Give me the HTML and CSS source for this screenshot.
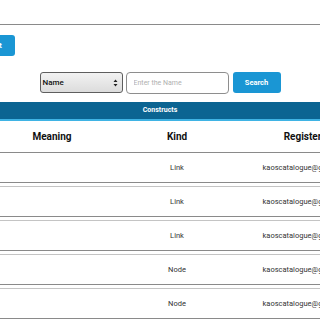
FILE: index.html
```html
<!DOCTYPE html>
<html lang="en">
<head>
  <meta charset="UTF-8">
  <title>Constructs</title>
  <link rel="stylesheet" href="styles.css">
</head>
<body>
  <div class="page">
    <div class="topbar"></div>

    <div class="actions">
      <button class="btn">Insert</button>
    </div>

    <div class="search">
      <div class="select">
        <span>Name</span>
        <svg width="5" height="8" viewBox="0 0 5 8">
          <path d="M0.5 3 L2.5 0.5 L4.5 3 Z M0.5 5 L2.5 7.5 L4.5 5 Z" fill="#222"></path>
        </svg>
      </div>
      <input type="text" class="field" placeholder="Enter the Name">
      <button class="btn search-btn">Search</button>
    </div>

    <div class="table">
      <div class="caption">Constructs</div>
      <div class="row head">
        <div>Name</div>
        <div>Meaning</div>
        <div>Kind</div>
        <div>Registered</div>
        <div>Actions</div>
      </div>
      <div class="row">
        <div>isA</div>
        <div></div>
        <div>Link</div>
        <div>kaoscatalogue@gmail.com</div>
        <div></div>
      </div>
      <div class="row">
        <div>partOf</div>
        <div></div>
        <div>Link</div>
        <div>kaoscatalogue@gmail.com</div>
        <div></div>
      </div>
      <div class="row">
        <div>refines</div>
        <div></div>
        <div>Link</div>
        <div>kaoscatalogue@gmail.com</div>
        <div></div>
      </div>
      <div class="row">
        <div>Goal</div>
        <div></div>
        <div>Node</div>
        <div>kaoscatalogue@gmail.com</div>
        <div></div>
      </div>
      <div class="row">
        <div>Agent</div>
        <div></div>
        <div>Node</div>
        <div>kaoscatalogue@gmail.com</div>
        <div></div>
      </div>
    </div>
  </div>
</body>
</html>
```

FILE: styles.css
```css
:root {
  --blue: #1a96d4;
  --dark-blue: #0b6492;
  --light-blue: #3fb3e4;
  --line: #8a8a8a;
  --line-light: #c4c4c4;
  --text: #333;
}

* {
  margin: 0;
  padding: 0;
  box-sizing: border-box;
}

html, body {
  overflow: hidden;
}

body {
  font-family: Roboto, "Liberation Sans", sans-serif;
  background: white;
  color: var(--text);
}

.page {
  width: 520px;
  margin-left: -100px;
}

.topbar {
  height: 25px;
  border-bottom: 1px solid var(--line);
}

.actions {
  padding: 8px 0 0 69px;
}

.btn {
  background: var(--blue);
  color: white;
  border: none;
  border-radius: 3px;
  font-family: inherit;
  font-weight: 700;
  font-size: 7.5px;
  height: 21px;
  padding: 0 13px;
}

.search {
  display: flex;
  justify-content: center;
  gap: 3px;
  margin-top: 16px;
}

.select {
  width: 83px;
  height: 21px;
  border: 1px solid #5e5e5e;
  border-radius: 3px;
  background: linear-gradient(#f2f2f2, #dcdcdc);
  display: flex;
  align-items: center;
  justify-content: space-between;
  padding: 0 4px 0 2px;
  font-size: 8px;
  font-weight: 500;
  color: #111;
}

.field {
  width: 103px;
  height: 22px;
  border: 1px solid #8e8e8e;
  border-radius: 4px;
  padding: 0 7px;
  font-family: inherit;
  font-size: 7px;
}

.field::placeholder {
  color: #b0b0b0;
}

.search-btn {
  width: 48px;
  height: 21px;
  margin-left: 1px;
  padding: 0;
}

.table {
  margin-top: 8px;
}

.caption {
  height: 19px;
  background: var(--dark-blue);
  border-bottom: 2px solid var(--light-blue);
  color: white;
  font-size: 7px;
  font-weight: 700;
  text-align: center;
  line-height: 17px;
}

.row {
  display: grid;
  grid-template-columns: 100px 104px 146px 116px 1fr;
  align-items: center;
  height: 30px;
  border-bottom: 1px solid var(--line);
  font-size: 7.5px;
  text-align: center;
  white-space: nowrap;
}

.row + .row {
  margin-top: 3px;
  border-top: 1px solid var(--line-light);
  height: 31px;
}

.row.head {
  height: 32px;
  font-size: 10px;
  font-weight: 700;
  color: #111;
}

.row.head + .row {
  margin-top: 0;
  border-top: none;
  height: 30px;
}
```
